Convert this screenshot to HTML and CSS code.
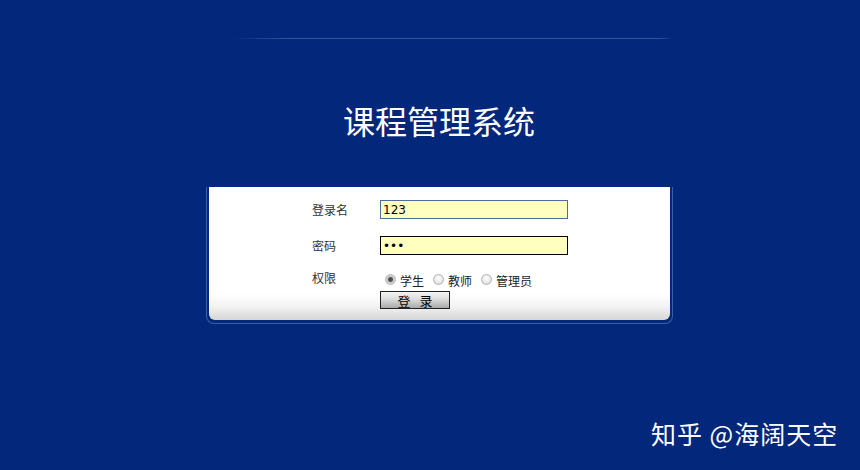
FILE: index.html
```html
<!DOCTYPE html>
<html lang="zh-CN">
<head>
<meta charset="utf-8">
<title>课程管理系统</title>
<link rel="stylesheet" href="styles.css">
</head>
<body>
<div class="page">
  <div class="top-line"></div>
  <h1 class="title">课程管理系统</h1>
  <div class="panel">
    <form class="card">
      <div class="grid">
        <label class="label" for="user">登录名</label>
        <input id="user" class="field focused" type="text" value="123">
        <label class="label" for="pwd">密码</label>
        <input id="pwd" class="field" type="password" value="123">
        <span class="label label-top">权限</span>
        <div class="opts">
          <div class="radios">
            <label class="opt"><input type="radio" name="role" class="radio" checked>学生</label>
            <label class="opt"><input type="radio" name="role" class="radio">教师</label>
            <label class="opt"><input type="radio" name="role" class="radio">管理员</label>
          </div>
          <button type="button" class="btn">登 录</button>
        </div>
      </div>
    </form>
  </div>
</div>
<div class="watermark">知乎 @海阔天空</div>
</body>
</html>
```
FILE: styles.css
```css
html, body {
  margin: 0;
  padding: 0;
}
body {
  background: #03277a;
  width: 860px;
  height: 470px;
  overflow: hidden;
  font-family: "Noto Sans CJK SC", "DejaVu Sans", sans-serif;
  position: relative;
}
.page {
  display: flex;
  flex-direction: column;
  align-items: flex-start;
}
.top-line {
  margin-top: 38px;
  margin-left: 232px;
  width: 440px;
  height: 1px;
  background: linear-gradient(to right, rgba(80,110,180,0) 0%, #33549d 12%, #33549d 97%, rgba(80,110,180,0) 100%);
}
.title {
  margin: 61px 0 0 0;
  width: 878px;
  text-align: center;
  color: #ffffff;
  font-weight: normal;
  font-size: 32px;
  line-height: 40px;
  height: 40px;
}
.panel {
  margin-top: 47px;
  margin-left: 206px;
  width: 461px;
  border: 1px solid #3d5fa8;
  border-top: none;
  border-radius: 0 0 8px 8px;
  padding: 0 2px 3px 2px;
}
.card {
  margin: 0;
  height: 133px;
  background: linear-gradient(to bottom, #ffffff 0%, #ffffff 80%, #f2f2f2 90%, #d6d6d6 100%);
  border-radius: 0 0 6px 6px;
  padding: 13px 0 0 103px;
  box-sizing: border-box;
}
.grid {
  display: grid;
  grid-template-columns: 68px auto;
  grid-template-rows: 19px 19px auto;
  row-gap: 17px;
  align-items: center;
}
.label {
  font-size: 12px;
  color: #333;
  line-height: 16px;
}
.label-top {
  align-self: start;
  margin-top: -2px;
}
.field {
  width: 188px;
  height: 19px;
  box-sizing: border-box;
  margin: 0;
  padding: 0 2px;
  background: #ffffc0;
  border: 1px solid #000;
  font-family: "DejaVu Sans", sans-serif;
  font-size: 12px;
  color: #000;
  outline: none;
}
.field.focused {
  border-color: #4f6d9b;
}
.opts {
  display: flex;
  flex-direction: column;
  align-items: flex-start;
}
.radios {
  display: flex;
  align-items: center;
  height: 16px;
  margin-top: 0;
  padding-left: 5px;
}
.opt {
  display: flex;
  align-items: center;
  font-size: 12px;
  color: #222;
  margin-right: 9px;
  line-height: 16px;
  padding-top: 2px;
}
.radio {
  -webkit-appearance: none;
  appearance: none;
  width: 11px;
  height: 11px;
  margin: -4px 4px 0 0;
  border-radius: 50%;
  border: 1px solid #b5b5b5;
  background: radial-gradient(circle at 50% 40%, #ffffff 0%, #e6e6e6 60%, #cfcfcf 100%);
  box-sizing: border-box;
}
.radio:checked {
  background: radial-gradient(circle, #444 0, #555 2px, #c8c8c8 3px, #e8e8e8 100%);
}
.btn {
  margin-top: 3px;
  width: 70px;
  height: 18px;
  padding: 0;
  border: 1px solid #222;
  background: linear-gradient(to bottom, #f4f4f4 0%, #dcdcdc 45%, #a9a9a9 100%);
  font-family: "Noto Sans CJK SC", sans-serif;
  font-size: 13px;
  line-height: 15px;
  color: #000;
  letter-spacing: 3px;
  text-indent: 3px;
}
.watermark {
  position: absolute;
  left: 651px;
  top: 417px;
  color: #ffffff;
  font-size: 25px;
  line-height: 32px;
  letter-spacing: 1px;
  white-space: pre;
}
```
